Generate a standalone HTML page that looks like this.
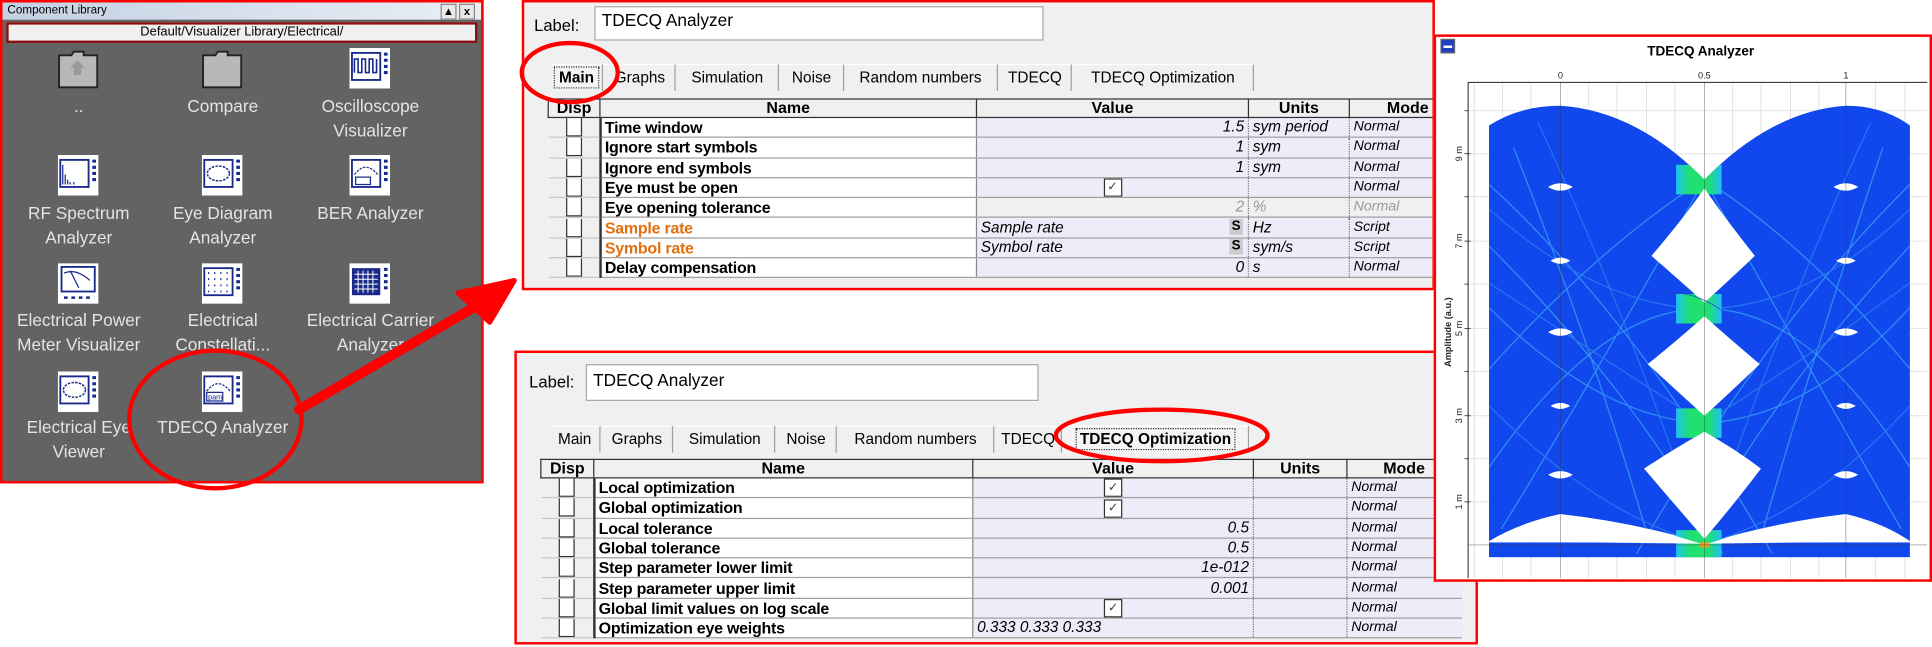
<!DOCTYPE html>
<html><head><meta charset="utf-8">
<style>
html,body{margin:0;padding:0;background:#fff;width:1932px;height:647px;overflow:hidden}
#w{position:absolute;left:0;top:0;width:1570px;height:526px;transform:scale(1.2306,1.2300);transform-origin:0 0;font-family:"Liberation Sans",sans-serif}
.abs{position:absolute}
#lib{left:0;top:0;width:389px;height:389px;border:2px solid #f00;background:#636363;overflow:hidden}
#lib .tb{left:0;top:0;width:389px;height:14px;background:linear-gradient(90deg,#c3d1e3,#e9eef5);font-size:9.5px;color:#000;line-height:14px;text-indent:4px}
.btn{top:1px;width:11px;height:11px;background:#e8e8e8;border:1px solid #888;font-size:9px;line-height:11px;text-align:center}
#lib .path{left:3px;top:16px;width:379px;height:13px;border:2px solid #8a1010;background:#f0f0f0;font-size:10.5px;line-height:13px;text-align:center;color:#000}
.lbl{width:118px;text-align:center;color:#e4e4e4;font-size:14px;line-height:20px}
.ic{width:33px;height:33px}
.panel{border:2px solid #f00;background:#f0f0f0;overflow:hidden}
.inp{background:#fff;border:1px solid #a8a8a8;font-size:14px;line-height:20px;text-indent:5px}
.tab{top:0;height:21px;font-size:12.5px;line-height:21px;text-align:center;border-right:1px solid #a0a0a0;border-top:1px solid #fff;color:#000}
.tab.sel{font-weight:bold;background:#f4f4f4}
.tab.sel span{border:1px dotted #333;padding:1px 3px}
table{position:absolute;border-collapse:collapse;table-layout:fixed;font-size:12.5px}
th{height:14px;border:1.5px solid #333;background:#f0f0f0;font-weight:bold;font-size:13px;line-height:14px;padding:0;overflow:hidden}
td{height:16.3px;padding:0 3px;border-bottom:1px solid #a0a0a0;white-space:nowrap;overflow:hidden;line-height:15px;box-sizing:border-box}
td.d{background:#f0f0f0;border-bottom-color:#c8c8c8;padding:0}
td.d div{width:13px;height:15px;margin:0 auto;background:#fff;border:1.5px solid #333;border-top:none;box-sizing:border-box}
td.n{background:#fff;font-weight:bold;font-family:"Liberation Sans Narrow","Liberation Sans",sans-serif;font-size:13px;border-left:2px solid #333;letter-spacing:-0.2px}
td.v{background:#ededfa;font-style:italic;text-align:right;border-right:1px dotted #777;border-left:1px solid #888}
td.u{background:#ededfa;font-style:italic}
td.m{background:#ededfa;font-style:italic;border-left:1px dotted #777;font-size:11.5px}
.or{color:#e07010!important}
.g{color:#999}
.ck{display:inline-block;width:13px;height:13px;border:1px solid #333;background:#fff;font-size:10px;line-height:13px;text-align:center;font-style:normal;color:#444;vertical-align:middle}
.sb{display:inline-block;width:11px;height:13px;background:#ccc;font-weight:bold;font-style:normal;font-size:11px;line-height:13px;text-align:center;margin-right:1px}
</style></head><body>
<div id="w">

<div id="lib" class="abs">
 <div class="abs tb">Component Library</div>
 <div class="abs btn" style="left:356px">&#9650;</div>
 <div class="abs btn" style="left:371px;font-weight:bold">x</div>
 <div class="abs path">Default/Visualizer Library/Electrical/</div>

 <svg class="abs ic" style="left:45px;top:37px" viewBox="0 0 33 33"><path d="M1 6h10l2-3h8v3h11v26H1z" fill="#b8b8b8" stroke="#222" stroke-width="1.5"/><path d="M16 10l6 6h-3v6h-6v-6h-3z" fill="#999"/></svg>
 <div class="abs lbl" style="left:3px;top:74px">..</div>
 <svg class="abs ic" style="left:162px;top:37px" viewBox="0 0 33 33"><path d="M1 6h10l2-3h8v3h11v26H1z" fill="#b8b8b8" stroke="#222" stroke-width="1.5"/></svg>
 <div class="abs lbl" style="left:120px;top:74px">Compare</div>
 <svg class="abs ic" style="left:282px;top:37px" viewBox="0 0 33 33"><rect width="33" height="33" fill="#fff"/><rect x="2" y="4" width="23" height="22" fill="none" stroke="#1a2a8a" stroke-width="1.5"/><path d="M4 20V9h3v11h3V9h3v11h3V9h3v11h3V9" fill="none" stroke="#1a2a8a" stroke-width="1.3"/><path d="M28 5h3M28 10h3M28 15h3M28 20h3" stroke="#1a2a8a" stroke-width="2.5"/></svg>
 <div class="abs lbl" style="left:240px;top:74px">Oscilloscope<br>Visualizer</div>

 <svg class="abs ic" style="left:45px;top:124px" viewBox="0 0 33 33"><rect width="33" height="33" fill="#fff"/><rect x="2" y="4" width="23" height="22" fill="none" stroke="#1a2a8a" stroke-width="1.5"/><path d="M4 24V8M6 24V16M8 24v-4M10 24v-2M13 24v-2" stroke="#1a2a8a"/><path d="M28 5h3M28 10h3M28 15h3M28 20h3" stroke="#1a2a8a" stroke-width="2.5"/></svg>
 <div class="abs lbl" style="left:3px;top:161px">RF Spectrum<br>Analyzer</div>
 <svg class="abs ic" style="left:162px;top:124px" viewBox="0 0 33 33"><rect width="33" height="33" fill="#fff"/><rect x="2" y="4" width="23" height="22" fill="none" stroke="#1a2a8a" stroke-width="1.5"/><ellipse cx="13.5" cy="15" rx="9" ry="6" fill="none" stroke="#1a2a8a" stroke-width="1.2" stroke-dasharray="2 1"/><path d="M28 5h3M28 10h3M28 15h3M28 20h3" stroke="#1a2a8a" stroke-width="2.5"/></svg>
 <div class="abs lbl" style="left:120px;top:161px">Eye Diagram<br>Analyzer</div>
 <svg class="abs ic" style="left:282px;top:124px" viewBox="0 0 33 33"><rect width="33" height="33" fill="#fff"/><rect x="2" y="4" width="23" height="22" fill="none" stroke="#1a2a8a" stroke-width="1.5"/><path d="M4 16q9-12 19 0" fill="none" stroke="#1a2a8a" stroke-dasharray="2 1"/><rect x="5" y="18" width="12" height="6" fill="none" stroke="#1a2a8a"/><path d="M28 5h3M28 10h3M28 15h3M28 20h3" stroke="#1a2a8a" stroke-width="2.5"/></svg>
 <div class="abs lbl" style="left:240px;top:161px">BER Analyzer</div>

 <svg class="abs ic" style="left:45px;top:212px" viewBox="0 0 33 33"><rect width="33" height="33" fill="#fff"/><rect x="3" y="3" width="27" height="20" fill="none" stroke="#1a2a8a" stroke-width="1.5"/><path d="M5 8q10-4 21 6M10 6l7 14" fill="none" stroke="#1a2a8a"/><path d="M5 28h3M11 28h3M17 28h3M23 28h3" stroke="#1a2a8a" stroke-width="2"/></svg>
 <div class="abs lbl" style="left:3px;top:248px">Electrical Power<br>Meter Visualizer</div>
 <svg class="abs ic" style="left:162px;top:212px" viewBox="0 0 33 33"><rect width="33" height="33" fill="#fff"/><rect x="2" y="4" width="23" height="22" fill="none" stroke="#1a2a8a" stroke-width="1.5"/><path d="M5 8h1M10 8h1M15 8h1M20 8h1M5 13h1M10 13h1M15 13h1M20 13h1M5 18h1M10 18h1M15 18h1M20 18h1M5 23h1M10 23h1M15 23h1M20 23h1" stroke="#1a2a8a" stroke-width="1.5"/><path d="M28 5h3M28 10h3M28 15h3M28 20h3" stroke="#1a2a8a" stroke-width="2.5"/></svg>
 <div class="abs lbl" style="left:120px;top:248px">Electrical<br>Constellati...</div>
 <svg class="abs ic" style="left:282px;top:212px" viewBox="0 0 33 33"><rect width="33" height="33" fill="#fff"/><rect x="2" y="4" width="23" height="22" fill="#1a2a8a"/><path d="M4 9h19M4 13h19M4 17h19M4 21h19M7 6v18M11 6v18M15 6v18M19 6v18" stroke="#fff" stroke-width="0.8"/><path d="M28 5h3M28 10h3M28 15h3M28 20h3" stroke="#1a2a8a" stroke-width="2.5"/></svg>
 <div class="abs lbl" style="left:240px;top:248px">Electrical Carrier<br>Analyzer</div>

 <svg class="abs ic" style="left:45px;top:300px" viewBox="0 0 33 33"><rect width="33" height="33" fill="#fff"/><rect x="2" y="4" width="23" height="22" fill="none" stroke="#1a2a8a" stroke-width="1.5"/><ellipse cx="13.5" cy="15" rx="9" ry="6" fill="none" stroke="#1a2a8a" stroke-width="1.2" stroke-dasharray="2 1"/><path d="M28 5h3M28 10h3M28 15h3M28 20h3" stroke="#1a2a8a" stroke-width="2.5"/></svg>
 <div class="abs lbl" style="left:3px;top:335px">Electrical Eye<br>Viewer</div>
 <svg class="abs ic" style="left:162px;top:300px" viewBox="0 0 33 33"><rect width="33" height="33" fill="#fff"/><rect x="2" y="4" width="23" height="22" fill="none" stroke="#1a2a8a" stroke-width="1.5"/><path d="M4 16q9-12 19 0" fill="none" stroke="#1a2a8a" stroke-dasharray="2 1"/><rect x="4" y="17" width="13" height="7" fill="#fff" stroke="#1a2a8a"/><text x="5" y="23" font-size="6" fill="#1a2a8a" font-family="Liberation Sans">pam</text><path d="M28 5h3M28 10h3M28 15h3M28 20h3" stroke="#1a2a8a" stroke-width="2.5"/></svg>
 <div class="abs lbl" style="left:120px;top:335px">TDECQ Analyzer</div>
</div>

<div class="abs panel" style="left:424px;top:0;width:738px;height:232px">
 <div class="abs" style="left:8px;top:11px;font-size:13.5px">Label:</div>
 <div class="abs inp" style="left:57px;top:3px;width:363px;height:26px">TDECQ Analyzer</div>
 <div class="abs" style="left:0;top:50px;width:738px;height:23px">
  <div class="abs tab sel" style="left:22px;width:41px"><span>Main</span></div>
  <div class="abs tab" style="left:66px;width:56px">Graphs</div>
  <div class="abs tab" style="left:124px;width:82px">Simulation</div>
  <div class="abs tab" style="left:208px;width:51px">Noise</div>
  <div class="abs tab" style="left:260px;width:124px">Random numbers</div>
  <div class="abs tab" style="left:386px;width:58px">TDECQ</div>
  <div class="abs tab" style="left:446px;width:146px">TDECQ Optimization</div>
 </div>
 <table style="left:19px;top:78px;width:760px">
  <colgroup><col style="width:42px"><col style="width:306px"><col style="width:221px"><col style="width:82px"><col style="width:109px"></colgroup>
  <tr><th>Disp</th><th>Name</th><th>Value</th><th>Units</th><th style="text-align:left;padding-left:30px">Mode</th></tr>
  <tr><td class="d"><div></div></td><td class="n">Time window</td><td class="v">1.5</td><td class="u">sym period</td><td class="m">Normal</td></tr>
  <tr><td class="d"><div></div></td><td class="n">Ignore start symbols</td><td class="v">1</td><td class="u">sym</td><td class="m">Normal</td></tr>
  <tr><td class="d"><div></div></td><td class="n">Ignore end symbols</td><td class="v">1</td><td class="u">sym</td><td class="m">Normal</td></tr>
  <tr><td class="d"><div></div></td><td class="n">Eye must be open</td><td class="v" style="text-align:center"><span class="ck">&#10003;</span></td><td class="u"></td><td class="m">Normal</td></tr>
  <tr><td class="d"><div></div></td><td class="n">Eye opening tolerance</td><td class="v g" style="background:#f0f0f0">2</td><td class="u g" style="background:#f0f0f0">%</td><td class="m g" style="background:#f0f0f0">Normal</td></tr>
  <tr><td class="d"><div></div></td><td class="n or">Sample rate</td><td class="v" style="text-align:left">Sample rate<span class="sb" style="float:right">S</span></td><td class="u">Hz</td><td class="m">Script</td></tr>
  <tr><td class="d"><div></div></td><td class="n or">Symbol rate</td><td class="v" style="text-align:left">Symbol rate<span class="sb" style="float:right">S</span></td><td class="u">sym/s</td><td class="m">Script</td></tr>
  <tr><td class="d"><div></div></td><td class="n">Delay compensation</td><td class="v">0</td><td class="u">s</td><td class="m">Normal</td></tr>
 </table>
</div>

<div class="abs panel" style="left:418px;top:285px;width:779px;height:235px">
 <div class="abs" style="left:10px;top:16px;font-size:13.5px">Label:</div>
 <div class="abs inp" style="left:56px;top:9px;width:366px;height:28px;line-height:24px">TDECQ Analyzer</div>
 <div class="abs" style="left:0;top:59px;width:779px;height:23px">
  <div class="abs tab" style="left:27px;width:40px">Main</div>
  <div class="abs tab" style="left:69px;width:57px">Graphs</div>
  <div class="abs tab" style="left:129px;width:80px">Simulation</div>
  <div class="abs tab" style="left:211px;width:48px">Noise</div>
  <div class="abs tab" style="left:261px;width:126px">Random numbers</div>
  <div class="abs tab" style="left:389px;width:53px">TDECQ</div>
  <div class="abs tab sel" style="left:444px;width:150px"><span>TDECQ Optimization</span></div>
 </div>
 <table style="left:19px;top:86px;width:748px">
  <colgroup><col style="width:43px"><col style="width:308px"><col style="width:228px"><col style="width:76px"><col style="width:93px"></colgroup>
  <tr><th>Disp</th><th>Name</th><th>Value</th><th>Units</th><th>Mode</th></tr>
  <tr><td class="d"><div></div></td><td class="n">Local optimization</td><td class="v" style="text-align:center"><span class="ck">&#10003;</span></td><td class="u"></td><td class="m">Normal</td></tr>
  <tr><td class="d"><div></div></td><td class="n">Global optimization</td><td class="v" style="text-align:center"><span class="ck">&#10003;</span></td><td class="u"></td><td class="m">Normal</td></tr>
  <tr><td class="d"><div></div></td><td class="n">Local tolerance</td><td class="v">0.5</td><td class="u"></td><td class="m">Normal</td></tr>
  <tr><td class="d"><div></div></td><td class="n">Global tolerance</td><td class="v">0.5</td><td class="u"></td><td class="m">Normal</td></tr>
  <tr><td class="d"><div></div></td><td class="n">Step parameter lower limit</td><td class="v">1e-012</td><td class="u"></td><td class="m">Normal</td></tr>
  <tr><td class="d"><div></div></td><td class="n">Step parameter upper limit</td><td class="v">0.001</td><td class="u"></td><td class="m">Normal</td></tr>
  <tr><td class="d"><div></div></td><td class="n">Global limit values on log scale</td><td class="v" style="text-align:center"><span class="ck">&#10003;</span></td><td class="u"></td><td class="m">Normal</td></tr>
  <tr><td class="d"><div></div></td><td class="n">Optimization eye weights</td><td class="v" style="text-align:left">0.333 0.333 0.333</td><td class="u"></td><td class="m">Normal</td></tr>
 </table>
</div>

<div class="abs" style="left:1165px;top:28px;width:401px;height:441px;border:2px solid #f00;background:#fff"></div>

<svg class="abs" style="left:0;top:0" width="1570" height="526" viewBox="0 0 1570 526">
 <defs>
  <clipPath id="ec"><path d="M1210,102 Q1235,86 1268,86 Q1330,90 1385,146 Q1440,90 1500,86 Q1530,86 1552,102 L1552,454 L1210,454 Z"/></clipPath>
  <linearGradient id="gg" x1="0" x2="1"><stop offset="0" stop-color="#20c0f0"/><stop offset="0.3" stop-color="#20e070"/><stop offset="0.7" stop-color="#20e070"/><stop offset="1" stop-color="#20c0f0"/></linearGradient>
 </defs>
 <rect x="1171" y="32" width="11" height="11" fill="#2040c0" stroke="#666"/>
 <rect x="1173" y="37" width="7" height="2" fill="#fff"/>
 <text x="1382" y="45" font-size="11" font-weight="bold" text-anchor="middle" font-family="Liberation Sans">TDECQ Analyzer</text>
 <g font-size="7.5" font-family="Liberation Sans" fill="#222" text-anchor="middle">
  <text x="1268" y="64">0</text><text x="1385" y="64">0.5</text><text x="1500" y="64">1</text>
 </g>
 <g stroke="#e2e2e2" stroke-width="0.8">
  <path d="M1198,67V470M1221,67V470M1244,67V470M1291,67V470M1314,67V470M1338,67V470M1361,67V470M1408,67V470M1431,67V470M1455,67V470M1478,67V470M1524,67V470M1548,67V470"/>
  <path d="M1193,90H1566M1193,125H1566M1193,160H1566M1193,196H1566M1193,231H1566M1193,267H1566M1193,302H1566M1193,338H1566M1193,373H1566M1193,408H1566"/>
 </g>
 <path d="M1193,67V470M1193,67H1566" stroke="#222" stroke-width="0.8" fill="none"/>
 <g stroke="#222" stroke-width="0.6">
  <path d="M1190,90h3M1190,125h5M1190,160h3M1190,196h5M1190,231h3M1190,267h5M1190,302h3M1190,338h5M1190,373h3M1190,408h5"/>
 </g>
 <g font-size="7.5" font-family="Liberation Sans" fill="#222" text-anchor="middle">
  <text transform="translate(1188,125) rotate(-90)">9 m</text>
  <text transform="translate(1188,196) rotate(-90)">7 m</text>
  <text transform="translate(1188,267) rotate(-90)">5 m</text>
  <text transform="translate(1188,338) rotate(-90)">3 m</text>
  <text transform="translate(1188,408) rotate(-90)">1 m</text>
  <text transform="translate(1179,270) rotate(-90)" font-weight="bold">Amplitude (a.u.)</text>
 </g>
 <path d="M1210,102 Q1235,86 1268,86 Q1330,90 1385,146 Q1440,90 1500,86 Q1530,86 1552,102 L1552,440 Q1530,425 1500,418 Q1440,425 1385,442 Q1330,425 1268,418 Q1235,425 1210,440 Z" fill="#1048ee"/>
 <rect x="1210" y="441" width="342" height="12" fill="#1048ee"/>
 <g clip-path="url(#ec)" stroke="#3aa0f4" stroke-width="1" fill="none" opacity="0.8">
  <path d="M1210,150 Q1330,260 1440,450M1210,200 Q1330,320 1400,450M1210,300 Q1300,200 1385,146M1210,380 Q1300,250 1385,251M1552,150 Q1440,260 1330,450M1552,200 Q1440,320 1370,450M1552,300 Q1470,200 1385,146M1552,380 Q1470,250 1385,251M1220,430 Q1300,300 1385,146M1545,430 Q1470,300 1385,146M1210,250 Q1300,340 1385,344M1552,250 Q1470,340 1385,344M1230,120 Q1300,300 1340,440M1530,120 Q1470,300 1430,440"/>
  <path d="M1210,170 Q1300,250 1385,251M1552,170 Q1470,250 1385,251M1210,330 Q1300,420 1385,442M1552,330 Q1470,420 1385,442M1210,230 Q1300,290 1385,344M1552,230 Q1470,290 1385,344M1250,100 Q1320,250 1385,442M1520,100 Q1450,250 1385,442" stroke="#2a7ff0"/>
 </g>
 <g clip-path="url(#ec)">
  <rect x="1362" y="134" width="37" height="24" fill="url(#gg)"/>
  <rect x="1362" y="239" width="37" height="24" fill="url(#gg)"/>
  <rect x="1362" y="332" width="37" height="24" fill="url(#gg)"/>
  <rect x="1362" y="431" width="37" height="22" fill="url(#gg)"/>
 </g>
 <rect x="1381" y="441" width="8" height="4" fill="#f0a020"/>
 <g fill="#fff">
  <path d="M1385,153 Q1400,175 1426,208 Q1405,228 1385,246 Q1365,228 1342,208 Q1370,175 1385,153Z"/>
  <path d="M1385,257 Q1405,275 1430,296 Q1405,320 1385,338 Q1365,320 1339,296 Q1365,275 1385,257Z"/>
  <path d="M1385,351 Q1410,365 1431,381 Q1405,415 1385,438 Q1365,415 1336,381 Q1360,365 1385,351Z"/>
  <path d="M1210,440 Q1235,425 1268,418 Q1330,425 1382,442 Z"/>
  <path d="M1552,440 Q1530,425 1500,418 Q1440,425 1388,442 Z"/>
  <path d="M1258,152 q10-6 20 0 q-10 6-20 0Z M1490,152 q10-6 20 0 q-10 6-20 0Z M1260,212 q8-5 16 0 q-8 5-16 0Z M1492,212 q8-5 16 0 q-8 5-16 0Z M1258,270 q10-6 20 0 q-10 6-20 0Z M1490,270 q10-6 20 0 q-10 6-20 0Z M1260,330 q8-5 16 0 q-8 5-16 0Z M1492,330 q8-5 16 0 q-8 5-16 0Z M1258,386 q10-6 20 0 q-10 6-20 0Z M1490,386 q10-6 20 0 q-10 6-20 0Z"/>
 </g>
 <path d="M1345,240 Q1380,230 1420,270" stroke="#2040d0" fill="none" stroke-width="0.6"/>
 <path d="M1193,443H1566M1268,67V470M1385,67V470M1500,67V470" stroke="#333" stroke-width="0.5" fill="none" opacity="0.6"/>

 <ellipse cx="175" cy="341" rx="70" ry="56" fill="none" stroke="#f00" stroke-width="3.5"/>
 <ellipse cx="463" cy="59" rx="39" ry="24" fill="none" stroke="#f00" stroke-width="3.5"/>
 <ellipse cx="944" cy="354" rx="86" ry="21" fill="none" stroke="#f00" stroke-width="3.5"/>
 <path d="M243,333 L402,240" stroke="#f00" stroke-width="8" stroke-linecap="round"/>
 <path d="M418,228 L372,238 L398,262 Z" fill="#f00" stroke="#f00" stroke-width="4" stroke-linejoin="round"/>
</svg>
</div>
</body></html>
